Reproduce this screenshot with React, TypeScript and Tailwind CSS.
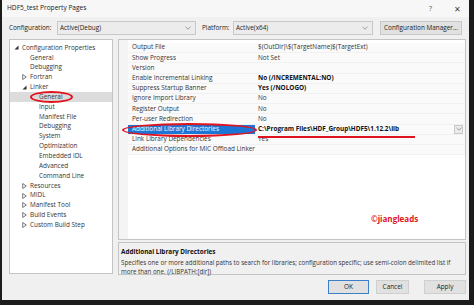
import React from "react";

const font = { fontFamily: '"Open Sans", "Noto Sans", sans-serif' };

type TreeItem = { label: string; depth: number; arrow?: "open" | "closed"; selected?: boolean };

const tree: TreeItem[] = [
    { label: "Configuration Properties", depth: 0, arrow: "open" },
    { label: "General", depth: 1 },
    { label: "Debugging", depth: 1 },
    { label: "Fortran", depth: 1, arrow: "closed" },
    { label: "Linker", depth: 1, arrow: "open" },
    { label: "General", depth: 2, selected: true },
    { label: "Input", depth: 2 },
    { label: "Manifest File", depth: 2 },
    { label: "Debugging", depth: 2 },
    { label: "System", depth: 2 },
    { label: "Optimization", depth: 2 },
    { label: "Embedded IDL", depth: 2 },
    { label: "Advanced", depth: 2 },
    { label: "Command Line", depth: 2 },
    { label: "Resources", depth: 1, arrow: "closed" },
    { label: "MIDL", depth: 1, arrow: "closed" },
    { label: "Manifest Tool", depth: 1, arrow: "closed" },
    { label: "Build Events", depth: 1, arrow: "closed" },
    { label: "Custom Build Step", depth: 1, arrow: "closed" },
];

const props: { name: string; value: string; bold?: boolean; selected?: boolean }[] = [
    { name: "Output File", value: "$(OutDir)\\$(TargetName)$(TargetExt)" },
    { name: "Show Progress", value: "Not Set" },
    { name: "Version", value: "" },
    { name: "Enable Incremental Linking", value: "No (/INCREMENTAL:NO)", bold: true },
    { name: "Suppress Startup Banner", value: "Yes (/NOLOGO)", bold: true },
    { name: "Ignore Import Library", value: "No" },
    { name: "Register Output", value: "No" },
    { name: "Per-user Redirection", value: "No" },
    { name: "Additional Library Directories", value: "C:\\Program Files\\HDF_Group\\HDF5\\1.12.2\\lib", bold: true, selected: true },
    { name: "Link Library Dependencies", value: "Yes" },
    { name: "Additional Options for MIC Offload Linker", value: "" },
];

function Arrow({ kind }: { kind: "open" | "closed" }) {
    if (kind === "open") {
        return (
            <svg width="5" height="5" viewBox="0 0 5 5">
                <polygon points="4.5,0.5 4.5,4.5 0.5,4.5" fill="#333" />
            </svg>
        );
    }
    return (
        <svg width="5" height="6" viewBox="0 0 5 6">
            <polygon points="0.7,0.5 4.3,3 0.7,5.5" fill="none" stroke="#555" strokeWidth="0.8" />
        </svg>
    );
}

function Chevron() {
    return (
        <svg width="6" height="4" viewBox="0 0 6 4">
            <polyline points="0.5,0.8 3,3.2 5.5,0.8" fill="none" stroke="#888" strokeWidth="0.8" />
        </svg>
    );
}

function Dropdown({ text, width }: { text: string; width: string }) {
    return (
        <div className={`${width} h-[14px] flex items-center justify-between border border-[#c8c8c8] bg-[#ececec] pl-[2px] pr-[4px]`}>
            <span className="text-[#222]">{text}</span>
            <Chevron />
        </div>
    );
}

export default function App() {
    return (
        <div className="w-[474px] h-[305px] bg-[#1c1c1c] pl-[2px] pr-[5px] pb-[5px] text-[6.4px] leading-none text-[#1a1a1a] whitespace-nowrap" style={font}>
            <div className="h-full flex flex-col bg-[#f0f0f0]">
                {/* title bar */}
                <div className="h-[17px] flex items-center bg-[#f7f7f7] pl-[5px] pr-[8px]">
                    <span className="flex-1 text-[6.6px]">HDF5_test Property Pages</span>
                    <span className="mr-[22px] text-[7px] text-[#555]">?</span>
                    <span className="text-[8px] text-[#444]">✕</span>
                </div>

                {/* configuration row */}
                <div className="h-[22px] flex items-center pl-[7px] pr-[5px]">
                    <span className="w-[48px]">Configuration:</span>
                    <Dropdown text="Active(Debug)" width="w-[139px]" />
                    <span className="ml-[6px] w-[31px]">Platform:</span>
                    <Dropdown text="Active(x64)" width="w-[140px]" />
                    <div className="ml-[7px] w-[82px] h-[14px] flex items-center justify-center border border-[#c8c8c8] bg-[#e1e1e1]">
                        Configuration Manager...
                    </div>
                </div>

                {/* main area */}
                <div className="flex gap-[5px] pl-[7px] pr-[3px] h-[236px]">
                    {/* tree */}
                    <div className="relative w-[104px] h-[235px] border border-[#c4c4c4] bg-white pt-[3px]">
                        {tree.map((t, i) => (
                            <div
                                key={i}
                                className={`h-[9.85px] flex items-center ${t.selected ? "bg-[#dcdcdc]" : ""}`}
                            >
                                <div
                                    className={`flex items-center ${t.depth === 0 ? "pl-[4px]" : t.depth === 1 ? "pl-[12px]" : "pl-[21px]"}`}
                                >
                                    <span className="w-[7px] flex items-center">
                                        {t.arrow ? <Arrow kind={t.arrow} /> : null}
                                    </span>
                                    <span className="ml-[1px] text-[#333]">{t.label}</span>
                                </div>
                            </div>
                        ))}
                        {/* red circle around selected General */}
                        <div className="absolute left-[20px] top-[51px] w-[43px] h-[12px] rounded-[50%] border-2 border-[#e0141e]" />
                    </div>

                    {/* right side */}
                    <div className="flex-1 flex flex-col gap-[2px]">
                        <div className="relative h-[202px] border border-[#c4c4c4] bg-white flex">
                            <div className="w-[9px] bg-[#f4f4f4]" />
                            <div className="flex-1 pt-[3px]">
                                {props.map((p, i) => (
                                    <div key={i} className="h-[10.2px] flex items-center border-b border-[#f1f1f1] bg-[#fafafa]">
                                        <div
                                            className={`w-[127px] h-full flex items-center pl-[4px] ${p.selected ? "bg-[#1c76d8] text-white" : "text-[#333]"}`}
                                        >
                                            {p.name}
                                        </div>
                                        <div className={`flex-1 h-full flex items-center pl-[3px] pr-[2px] ${p.bold ? "font-bold text-[#111]" : "text-[#333]"}`}>
                                            <span className="flex-1">{p.value}</span>
                                            {p.selected ? (
                                                <span className="w-[9px] h-[9px] flex items-center justify-center border border-[#c8c8c8] bg-[#ececec]">
                                                    <Chevron />
                                                </span>
                                            ) : null}
                                        </div>
                                    </div>
                                ))}
                            </div>
                            {/* red annotations */}
                            <div className="absolute left-[3px] top-[83px] w-[135px] h-[14px] rounded-[50%] border-2 border-[#e0141e]" />
                            <div className="absolute left-[139px] top-[96px] w-[157px] h-[2px] bg-[#e0141e]" />
                            <div className="absolute left-[252px] top-[175px] text-[8px] font-bold text-[#e0141e]">©jiangleads</div>
                        </div>

                        <div className="h-[33px] border border-[#c4c4c4] bg-[#f0f0f0] px-[2px] pt-[4px] leading-[9px] whitespace-normal">
                            <div className="font-bold text-[#111]">Additional Library Directories</div>
                            <div className="mt-[2px] text-[6.2px] text-[#333]">
                                Specifies one or more additional paths to search for libraries; configuration specific; use semi-colon delimited list if more than one. (/LIBPATH:[dir])
                            </div>
                        </div>
                    </div>
                </div>

                {/* buttons */}
                <div className="flex-1 flex items-center justify-end pr-[3px] pb-[1px]">
                    <div className="w-[41px] h-[14px] flex items-center justify-center border border-[#3c7fc8] bg-[#e1e1e1]">OK</div>
                    <div className="ml-[7px] w-[33px] h-[14px] flex items-center justify-center border border-[#cfcfcf] bg-[#e1e1e1]">Cancel</div>
                    <div className="ml-[15px] w-[42px] h-[14px] flex items-center justify-center border border-[#cfcfcf] bg-[#e1e1e1]">Apply</div>
                </div>
            </div>
        </div>
    );
}
